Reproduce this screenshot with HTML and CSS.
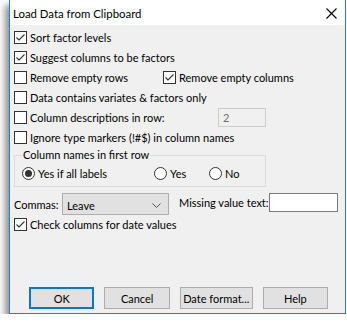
FILE: index.html
```html
<!DOCTYPE html>
<html>
<head>
<meta charset="utf-8">
<link rel="stylesheet" href="styles.css">
</head>
<body>
<div class="win">
  <div class="titlebar">
    <span class="title">Load Data from Clipboard</span>
    <svg class="close" width="11" height="11" viewBox="0 0 11 11"><path d="M0.5 0.5 L10.5 10.5 M10.5 0.5 L0.5 10.5" stroke="#000" stroke-width="1.1" fill="none"/></svg>
  </div>
  <div class="content">
    <div class="row">
      <label class="cb"><span class="box checked"><svg width="11" height="11" viewBox="0 0 11 11"><path d="M1.5 5.5 L4 8 L9.5 2.5" stroke="#333" stroke-width="1.1" fill="none"/></svg></span>Sort factor levels</label>
    </div>
    <div class="row">
      <label class="cb"><span class="box checked"><svg width="11" height="11" viewBox="0 0 11 11"><path d="M1.5 5.5 L4 8 L9.5 2.5" stroke="#333" stroke-width="1.1" fill="none"/></svg></span>Suggest columns to be factors</label>
    </div>
    <div class="row">
      <label class="cb col1"><span class="box"></span>Remove empty rows</label>
      <label class="cb"><span class="box checked"><svg width="11" height="11" viewBox="0 0 11 11"><path d="M1.5 5.5 L4 8 L9.5 2.5" stroke="#333" stroke-width="1.1" fill="none"/></svg></span>Remove empty columns</label>
    </div>
    <div class="row">
      <label class="cb"><span class="box"></span>Data contains variates &amp; factors only</label>
    </div>
    <div class="row">
      <label class="cb col2"><span class="box"></span>Column descriptions in row:</label>
      <span class="numbox">2</span>
    </div>
    <div class="row">
      <label class="cb"><span class="box"></span>Ignore type markers (!#$) in column names</label>
    </div>
    <fieldset class="group">
      <legend>Column names in first row</legend>
      <div class="radios">
        <label class="rb r1"><span class="radio on"></span>Yes if all labels</label>
        <label class="rb r2"><span class="radio"></span>Yes</label>
        <label class="rb"><span class="radio"></span>No</label>
      </div>
    </fieldset>
    <div class="commas">
      <span class="lbl clbl">Commas:</span>
      <span class="select"><span>Leave</span><svg width="9" height="5" viewBox="0 0 9 5"><path d="M0.5 0.5 L4.5 4.5 L8.5 0.5" stroke="#555" stroke-width="1" fill="none"/></svg></span>
      <span class="lbl miss">Missing value text:</span>
      <span class="textbox"></span>
    </div>
    <div class="row date">
      <label class="cb"><span class="box checked"><svg width="11" height="11" viewBox="0 0 11 11"><path d="M1.5 5.5 L4 8 L9.5 2.5" stroke="#333" stroke-width="1.1" fill="none"/></svg></span>Check columns for date values</label>
    </div>
    <div class="buttons">
      <span class="btn def">OK</span>
      <span class="btn">Cancel</span>
      <span class="btn wide">Date format...</span>
      <span class="btn">Help</span>
    </div>
  </div>
</div>
</body>
</html>
```
FILE: styles.css
```css
html, body {
  margin: 0;
  padding: 0;
  background: #fff;
}
body {
  font-family: Lato, "Liberation Sans", sans-serif;
  font-size: 11px;
  color: #000;
}
.win {
  box-sizing: border-box;
  margin-left: 9px;
  width: 337px;
  height: 314px;
  border: 1px solid #1883d7;
  border-top: none;
  background: #f0f0f0;
  box-shadow: -4px 5px 7px rgba(0,0,0,0.45);
  display: flex;
  flex-direction: column;
}
.titlebar {
  height: 25px;
  background: #fff;
  display: flex;
  align-items: center;
  padding-left: 3px;
  padding-right: 8px;
  flex: none;
}
.title {
  font-size: 11.4px;
  flex: 1;
  padding-top: 1px;
}
.close {
  margin-top: 1px;
}
.content {
  flex: 1;
  display: flex;
  flex-direction: column;
  padding: 2px 7px 4px 4px;
}
.row {
  height: 20px;
  display: flex;
  align-items: center;
}
.cb, .rb {
  display: flex;
  align-items: center;
  white-space: nowrap;
}
.box {
  box-sizing: border-box;
  width: 13px;
  height: 13px;
  border: 1px solid #333;
  background: #fff;
  margin-right: 3px;
  display: flex;
  align-items: center;
  justify-content: center;
  flex: none;
}
.col1 { width: 149px; }
.col2 { width: 204px; }
.numbox {
  box-sizing: border-box;
  width: 48px;
  height: 19px;
  border: 1px solid #cccccc;
  background: #f0f0f0;
  color: #6d6d6d;
  padding-left: 4px;
  line-height: 17px;
}
.group {
  margin: 0;
  padding: 2px 0 5px 7px;
  width: 252px;
  box-sizing: border-box;
  border: 1px solid #dcdcdc;
}
.group legend {
  padding: 0 1px;
  margin-left: 0;
  line-height: 16px;
}
.radios {
  display: flex;
  height: 16px;
  align-items: center;
}
.radio {
  box-sizing: border-box;
  width: 13px;
  height: 13px;
  border: 1px solid #333;
  border-radius: 50%;
  background: #fff;
  margin-right: 3px;
  flex: none;
  position: relative;
}
.radio.on::after {
  content: "";
  position: absolute;
  left: 2px;
  top: 2px;
  width: 7px;
  height: 7px;
  border-radius: 50%;
  background: #333;
}
.r1 { width: 132px; }
.r2 { width: 55px; }
.commas {
  display: flex;
  align-items: center;
  margin-top: 6px;
  height: 22px;
}
.lbl {
  white-space: nowrap;
}
.clbl {
  width: 48px;
  flex: none;
}
.select {
  box-sizing: border-box;
  width: 107px;
  height: 22px;
  border: 1px solid #adadad;
  background: #e1e1e1;
  display: flex;
  align-items: center;
  justify-content: space-between;
  padding: 2px 7px 0 4px;
  flex: none;
}
.miss {
  margin-left: 10px;
  margin-bottom: 3px;
}
.textbox {
  box-sizing: border-box;
  width: 69px;
  height: 19px;
  border: 1px solid #7a7a7a;
  background: #fff;
  margin-left: auto;
  margin-bottom: 3px;
  flex: none;
}
.row.date {
  margin-top: -1px;
}
.buttons {
  margin-top: auto;
  display: flex;
  padding-left: 15px;
}
.btn {
  box-sizing: border-box;
  width: 70px;
  height: 22px;
  border: 1px solid #adadad;
  background: #e1e1e1;
  display: flex;
  align-items: center;
  justify-content: center;
  margin-right: 10px;
  white-space: nowrap;
}
.btn.def {
  border: 2px solid #0078d7;
}
.btn.wide { width: 78px; }
```
